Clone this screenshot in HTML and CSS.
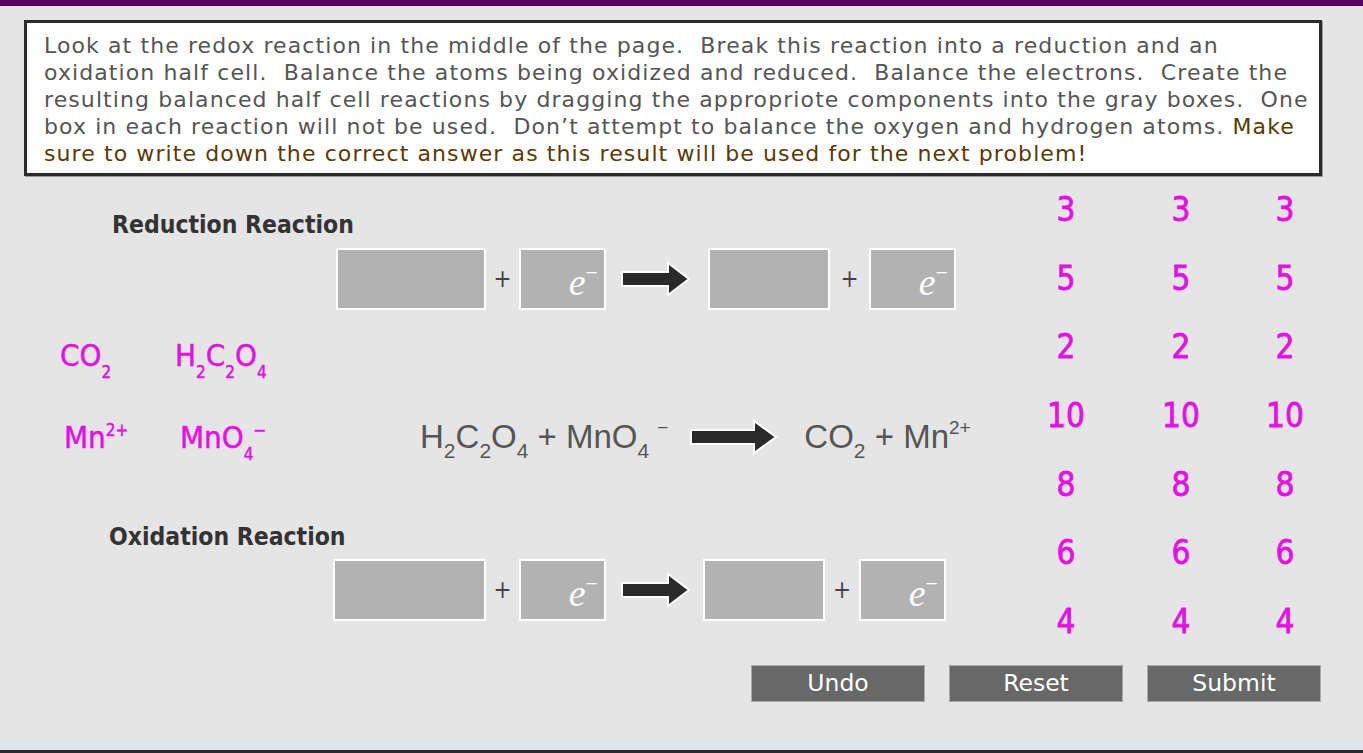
FILE: index.html
```html
<!DOCTYPE html>
<html>
<head>
    <meta charset="UTF-8">
    <title>Redox Half Reactions</title>
    <link rel="stylesheet" href="styles.css">
</head>
<body>
    <div class="page">
        <div class="topbar"></div>

        <div class="prompt">
            Look at the redox reaction in the middle of the page.&nbsp; Break this reaction into a reduction and an<br>
            oxidation half cell.&nbsp; Balance the atoms being oxidized and reduced.&nbsp; Balance the electrons.&nbsp; Create the<br>
            resulting balanced half cell reactions by dragging the appropriote components into the gray boxes.&nbsp; One<br>
            box in each reaction will not be used.&nbsp; Don’t attempt to balance the oxygen and hydrogen atoms. <span class="warn">Make<br>
            sure to write down the correct answer as this result will be used for the next problem!</span>
        </div>

        <div class="stage">
            <div class="work">
                <div class="label label-red">Reduction Reaction</div>
                <div class="half half-red">
                    <div class="slot slot-a"></div>
                    <span class="plus">+</span>
                    <div class="slot slot-e"><span class="elec">e<sup>−</sup></span></div>
                    <svg class="arrow" width="70" height="36" viewBox="0 0 70 36">
                        <polygon points="1,11 47,11 47,2 68,18 47,34 47,25 1,25" fill="#2a2a2a" stroke="#ffffff" stroke-width="2"/>
                    </svg>
                    <div class="slot slot-b"></div>
                    <span class="plus plus-wide">+</span>
                    <div class="slot slot-e"><span class="elec">e<sup>−</sup></span></div>
                </div>

                <div class="species-row">
                    <span class="chem chem-co2">CO<sub>2</sub></span>
                    <span class="chem chem-ox">H<sub>2</sub>C<sub>2</sub>O<sub>4</sub></span>
                </div>

                <div class="species-row species-row2">
                    <span class="chem chem-mn">Mn<sup>2+</sup></span>
                    <span class="chem chem-mno4">MnO<sub>4</sub><sup>−</sup></span>
                    <div class="equation">
                        <span>H<sub>2</sub>C<sub>2</sub>O<sub>4</sub> + MnO<sub>4</sub><sup class="neg">−</sup></span>
                        <svg class="arrow-big" width="88" height="36" viewBox="0 0 88 36">
                            <polygon points="1,11 64,11 64,2 86,18 64,34 64,25 1,25" fill="#2a2a2a" stroke="#ffffff" stroke-width="2"/>
                        </svg>
                        <span>CO<sub>2</sub> + Mn<sup>2+</sup></span>
                    </div>
                </div>

                <div class="label label-ox">Oxidation Reaction</div>
                <div class="half half-ox">
                    <div class="slot slot-a2"></div>
                    <span class="plus">+</span>
                    <div class="slot slot-e"><span class="elec">e<sup>−</sup></span></div>
                    <svg class="arrow" width="70" height="36" viewBox="0 0 70 36">
                        <polygon points="1,11 47,11 47,2 68,18 47,34 47,25 1,25" fill="#2a2a2a" stroke="#ffffff" stroke-width="2"/>
                    </svg>
                    <div class="slot slot-b2"></div>
                    <span class="plus plus-ox">+</span>
                    <div class="slot slot-e"><span class="elec">e<sup>−</sup></span></div>
                </div>
            </div>

            <div class="coeffs">
                <div class="coeff-col col-1">
                    <span>3</span><span>5</span><span>2</span><span>10</span><span>8</span><span>6</span><span>4</span>
                </div>
                <div class="coeff-col col-2">
                    <span>3</span><span>5</span><span>2</span><span>10</span><span>8</span><span>6</span><span>4</span>
                </div>
                <div class="coeff-col col-3">
                    <span>3</span><span>5</span><span>2</span><span>10</span><span>8</span><span>6</span><span>4</span>
                </div>
            </div>
        </div>

        <div class="controls">
            <button class="btn">Undo</button>
            <button class="btn">Reset</button>
            <button class="btn">Submit</button>
        </div>
    </div>
    <div class="bottom-strip"></div>
    <div class="bottom-dark"></div>
</body>
</html>
```

FILE: styles.css
```css
/* page */
body {
    margin: 0;
    background-color: #e5e5e5;
    font-family: "DejaVu Sans Condensed", "DejaVu Sans", sans-serif;
    overflow: hidden;
}

.page {
    height: 741px;
}

.topbar {
    height: 6px;
    background-color: #5c0066;
}

/* instructions */
.prompt {
    margin: 14px 0 0 24px;
    width: 1275px;
    height: 141px;
    padding: 9px 0 0 17px;
    background-color: #ffffff;
    border: 3px solid #2b2b2b;
    box-shadow: 1px 1px 0 #9a9a9a;
    color: #555555;
    font-family: "DejaVu Sans", sans-serif;
    font-size: 22px;
    letter-spacing: 1.1px;
    line-height: 27px;
    white-space: nowrap;
}

.warn {
    color: #5a3a06;
}

/* work area */
.stage {
    display: flex;
}

.work {
    width: 1036px;
}

.label {
    height: 28px;
    line-height: 28px;
    font-size: 24.5px;
    font-weight: bold;
    color: #333333;
}

.label-red {
    margin: 35px 0 0 112px;
}

.label-ox {
    margin: 66px 0 0 109px;
}

.half {
    display: flex;
    align-items: center;
    height: 62px;
    margin-top: 9px;
}

.half-red {
    padding-left: 336px;
}

.half-ox {
    margin-top: 8px;
    padding-left: 333px;
}

.slot {
    box-sizing: border-box;
    height: 62px;
    background-color: #b2b2b2;
    border: 2px solid #ffffff;
    position: relative;
}

.slot-a { width: 150px; }
.slot-a2 { width: 153px; }
.slot-b { width: 122px; margin-left: 17px; }
.slot-b2 { width: 122px; margin-left: 12px; }
.slot-e { width: 87px; }

.plus {
    width: 33px;
    text-align: center;
    font-size: 24px;
    color: #444444;
}

.plus-wide { width: 39px; }
.plus-ox { width: 34px; }

.elec {
    position: absolute;
    right: 6px;
    bottom: 9px;
    font-family: "Liberation Serif", serif;
    font-style: italic;
    font-size: 38px;
    line-height: 34px;
    color: #ffffff;
}

.elec sup {
    font-style: normal;
    font-size: 22px;
    vertical-align: 15px;
    line-height: 0;
}

.arrow {
    margin-left: 15px;
}

/* species to drag */
.species-row {
    display: flex;
    align-items: center;
    height: 40px;
    margin-top: 25px;
}

.species-row2 {
    margin-top: 42px;
}

.chem {
    color: #e60fe6;
    font-size: 31px;
    line-height: 40px;
    -webkit-text-stroke: 0.5px #e60fe6;
}

.chem sub {
    font-size: 17px;
    vertical-align: -12px;
    line-height: 0;
}

.chem sup {
    font-size: 17px;
    vertical-align: 12px;
    line-height: 0;
}

.chem-co2 { margin-left: 60px; width: 115px; }
.chem-mn { margin-left: 64px; width: 116px; }
.chem-mno4 { width: 240px; }

.equation {
    display: flex;
    align-items: center;
    color: #555555;
    font-family: "Liberation Sans", sans-serif;
    font-size: 33px;
    line-height: 40px;
}

.equation sub {
    font-size: 21px;
    vertical-align: -10px;
    line-height: 0;
}

.equation sup {
    font-size: 19px;
    vertical-align: 14px;
    line-height: 0;
}

.equation .neg {
    margin-left: 8px;
}

.arrow-big {
    margin: 0 26px 0 22px;
}

/* coefficient tiles */
.coeffs {
    display: flex;
}

.coeff-col {
    display: flex;
    flex-direction: column;
    width: 60px;
}

.col-2 { margin-left: 55px; }
.col-3 { margin-left: 44px; }

.coeff-col span {
    height: 68.7px;
    line-height: 68.7px;
    text-align: center;
    color: #e60fe6;
    font-size: 33px;
    -webkit-text-stroke: 0.8px #e60fe6;
}

/* buttons */
.controls {
    display: flex;
    gap: 24px;
    margin: 8px 0 0 751px;
}

.btn {
    width: 174px;
    height: 37px;
    padding: 0;
    background-color: #686868;
    border: 1px solid #a8a8a8;
    color: #ffffff;
    font-family: "DejaVu Sans", sans-serif;
    font-size: 23.5px;
}

.bottom-strip {
    height: 9px;
    background-color: #e0e4ec;
}

.bottom-dark {
    height: 3px;
    background-color: #2a2a2a;
}
```
